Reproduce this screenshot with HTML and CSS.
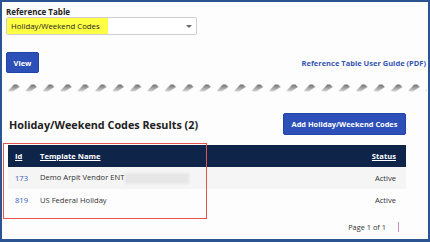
FILE: index.html
```html
<!DOCTYPE html>
<html>
<head>
<meta charset="utf-8">
<link rel="stylesheet" href="styles.css">
</head>
<body>
<div class="frame">
  <div class="main">
    <div class="field">
      <div class="label">Reference Table</div>
      <div class="select">
        <span class="hl">Holiday/Weekend Codes</span>
        <span class="caret"></span>
      </div>
    </div>
    <div class="actions">
      <button class="btn view">View</button>
      <a class="guide">Reference Table User Guide (PDF)</a>
    </div>
    <svg class="tear" width="420" height="11" viewBox="0 0 420 11">
      <defs>
        <linearGradient id="g" x1="0" y1="0" x2="0" y2="1">
          <stop offset="0" stop-color="#6f6f6f"/>
          <stop offset="1" stop-color="#d6d6d6"/>
        </linearGradient>
        <pattern id="p" width="17.4" height="11" patternUnits="userSpaceOnUse">
          <polygon points="1,9 7,2.5 10,2.5 12.5,5 6,9.5 3,9.5" fill="url(#g)"/>
        </pattern>
      </defs>
      <rect width="420" height="11" fill="url(#p)"/>
    </svg>
    <div class="results">
      <div class="results-head">
        <h2>Holiday/Weekend Codes Results (2)</h2>
        <button class="btn add">Add Holiday/Weekend Codes</button>
      </div>
      <table class="grid">
        <thead>
          <tr><th class="c-id">Id</th><th>Template Name</th><th class="c-status">Status</th></tr>
        </thead>
        <tbody>
          <tr class="odd"><td class="c-id"><a>173</a></td><td>Demo Arpit Vendor ENT<span class="blur"></span></td><td class="c-status">Active</td></tr>
          <tr><td class="c-id"><a>819</a></td><td>US Federal Holiday</td><td class="c-status">Active</td></tr>
        </tbody>
      </table>
      <div class="pager"><span>Page 1 of 1</span><span class="bar"></span></div>
    </div>
  </div>
  <div class="mark"></div>
</div>
</body>
</html>
```

FILE: styles.css
```css
* { box-sizing: border-box; }
html, body { margin: 0; padding: 0; background: #fff; }
body { font-family: "Open Sans", "Liberation Sans", sans-serif; color: #222; }

.frame {
  position: relative;
  width: 430px;
  height: 242px;
  border: 2px solid #2b5592;
  border-bottom-width: 3px;
  background: #fdfdfd;
  overflow: hidden;
}

.main { padding: 5px 2px 0 4px; }

.label { font-size: 8px; font-weight: 700; line-height: 10px; color: #222; }

.select {
  width: 191px;
  height: 18px;
  border: 1px solid #cfcfcf;
  border-radius: 2px;
  background: #fff;
  display: flex;
  align-items: stretch;
  justify-content: space-between;
}
.hl {
  background: #ffff44;
  width: 101px;
  font-size: 7.8px;
  line-height: 16px;
  padding-left: 4px;
  color: #222;
}
.caret {
  align-self: center;
  margin-right: 4px;
  width: 0; height: 0;
  border-left: 3px solid transparent;
  border-right: 3px solid transparent;
  border-top: 3.5px solid #666;
}

.actions {
  margin-top: 17px;
  display: flex;
  justify-content: space-between;
  align-items: flex-end;
}
.btn {
  font-family: inherit;
  border: 1px solid #1f43a8;
  background: #2c4fb8;
  color: #fff;
  font-weight: 700;
  font-size: 7.4px;
  border-radius: 2px;
  padding: 0;
}
.view { width: 33px; height: 21px; }
.guide {
  color: #3555b2;
  font-size: 7.5px;
  font-weight: 700;
  line-height: 10px;
  margin-bottom: 5px;
}

.tear { display: block; margin: 9px 0 0 1px; }

.results { padding: 0 20px 0 2px; }
.results-head {
  margin-top: 20px;
  display: flex;
  justify-content: space-between;
  align-items: center;
}
h2 {
  margin: 0 0 0 1px;
  font-size: 10.8px;
  font-weight: 700;
  color: #222;
}
.add { width: 123px; height: 22px; }

.grid {
  margin-top: 10px;
  width: 100%;
  border-collapse: collapse;
  font-size: 7.6px;
}
.grid th {
  background: #0e2449;
  color: #fff;
  font-weight: 700;
  text-decoration: underline;
  text-align: left;
  height: 22px;
  padding: 0;
}
.grid td { height: 22px; padding: 0; color: #333; }
.grid tr.odd td { background: #f5f5f5; }
.grid .c-id { width: 32px; padding-left: 7px; }
.grid .c-status { text-align: right; padding-right: 10px; }
.grid a { color: #3a5cb5; }
.blur {
  display: inline-block;
  vertical-align: middle;
  width: 64px;
  height: 11px;
  margin-left: 1px;
  background: #e6e6e6;
  filter: blur(1px);
}

.pager {
  margin-top: 11px;
  display: flex;
  justify-content: flex-end;
  align-items: center;
  gap: 12px;
  font-size: 7.4px;
  color: #333;
  padding-right: 7px;
}
.bar { width: 1px; height: 10px; background: #c58bc4; }

.mark {
  position: absolute;
  left: 1px;
  top: 141px;
  width: 204px;
  height: 76px;
  border: 1.5px solid #e5534f;
}
```
